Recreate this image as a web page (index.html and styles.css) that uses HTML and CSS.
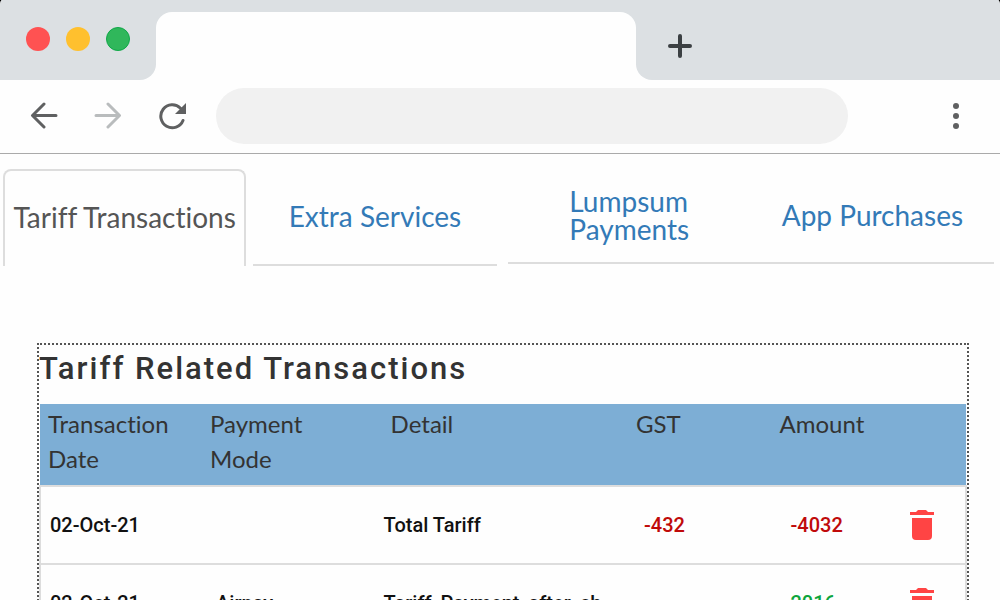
FILE: index.html
```html
<!DOCTYPE html>
<html lang="en">
<head>
    <meta charset="UTF-8">
    <meta name="viewport" content="width=device-width, initial-scale=1.0">
    <title>Tariff Related Transactions</title>
    <link rel="stylesheet" href="styles.css">
</head>
<body>
    <div class="browser">
        <div class="tab-strip">
            <div class="window-controls">
                <button class="dot dot-close" aria-label="Close"></button>
                <button class="dot dot-minimize" aria-label="Minimize"></button>
                <button class="dot dot-expand" aria-label="Expand"></button>
            </div>
            <div class="tab-wrap"><div class="tab"></div></div>
            <div class="strip-end">
                <button class="icon-btn new-tab" aria-label="New tab">
                    <svg width="24" height="24" viewBox="0 0 24 24" stroke="#3c4043" stroke-width="4" stroke-linecap="round">
                        <path d="M12 2v20M2 12h20"/>
                    </svg>
                </button>
            </div>
        </div>

        <div class="toolbar">
            <button class="icon-btn" aria-label="Back">
                <svg width="28" height="28" viewBox="0 0 28 28" fill="none" stroke="#5f6061" stroke-width="3" stroke-linecap="round" stroke-linejoin="round">
                    <path d="M14 2L2.500 13.500L14 25M3 13.500H26"/>
                </svg>
            </button>
            <button class="icon-btn" aria-label="Forward">
                <svg width="28" height="28" viewBox="0 0 28 28" fill="none" stroke="#b9bcbd" stroke-width="3" stroke-linecap="round" stroke-linejoin="round">
                    <path d="M14 2L25.500 13.500L14 25M25 13.500H2"/>
                </svg>
            </button>
            <button class="icon-btn" aria-label="Reload">
                <svg width="28" height="28" viewBox="0 0 28 28" fill="none" stroke="#5f6061" stroke-width="3" stroke-linecap="round">
                    <path d="M25 18.500A11.500 11.500 0 1 1 22.500 6.200"/>
                    <path d="M28 1V12H17Z" fill="#5f6061" stroke="none"/>
                </svg>
            </button>
            <input class="address" type="text" aria-label="Address">
            <button class="icon-btn" aria-label="Menu">
                <svg width="8" height="28" viewBox="0 0 8 28" fill="#5f6061">
                    <circle cx="4" cy="4" r="3"/>
                    <circle cx="4" cy="14" r="3"/>
                    <circle cx="4" cy="24" r="3"/>
                </svg>
            </button>
        </div>

        <main class="page">
            <nav class="nav-tabs">
                <a href="#tariff" class="nav-tab active">Tariff Transactions</a>
                <a href="#extra" class="nav-tab">Extra Services</a>
                <a href="#lumpsum" class="nav-tab short spaced"><span>Lumpsum<br>Payments</span></a>
                <a href="#apps" class="nav-tab short">App Purchases</a>
            </nav>

            <section class="panel" id="tariff">
                <h2>Tariff Related Transactions</h2>
                <table>
                    <thead>
                        <tr>
                            <th class="col-date">Transaction Date</th>
                            <th class="col-mode">Payment Mode</th>
                            <th class="col-detail">Detail</th>
                            <th class="col-gst">GST</th>
                            <th class="col-amount">Amount</th>
                            <th class="col-action"></th>
                        </tr>
                    </thead>
                    <tbody>
                        <tr>
                            <td class="col-date">02-Oct-21</td>
                            <td class="col-mode"></td>
                            <td class="col-detail">Total Tariff</td>
                            <td class="col-gst debit">-432</td>
                            <td class="col-amount debit">-4032</td>
                            <td class="col-action">
                                <button class="icon-btn" aria-label="Delete">
                                    <svg width="24" height="30" viewBox="0 0 24 30" fill="#ff4444">
                                        <path d="M0 2H6L8 0H16L18 2H24V5H0ZM2 8H22V26Q22 30 18 30H6Q2 30 2 26Z"/>
                                    </svg>
                                </button>
                            </td>
                        </tr>
                        <tr>
                            <td class="col-date">02-Oct-21</td>
                            <td class="col-mode">Airpay</td>
                            <td class="col-detail">Tariff_Payment_after_ch</td>
                            <td class="col-gst"></td>
                            <td class="col-amount credit">2016</td>
                            <td class="col-action">
                                <button class="icon-btn" aria-label="Delete">
                                    <svg width="24" height="30" viewBox="0 0 24 30" fill="#ff4444">
                                        <path d="M0 2H6L8 0H16L18 2H24V5H0ZM2 8H22V26Q22 30 18 30H6Q2 30 2 26Z"/>
                                    </svg>
                                </button>
                            </td>
                        </tr>
                    </tbody>
                </table>
            </section>
        </main>
    </div>
</body>
</html>
```
FILE: styles.css
```css
* {
    margin: 0;
    padding: 0;
    box-sizing: border-box;
}

body {
    font-family: Lato, "Liberation Sans", sans-serif;
    font-variant-ligatures: none;
    background: #000;
    color: #333;
}

.browser {
    height: 100vh;
    display: flex;
    flex-direction: column;
    background: #fefefe;
    border-radius: 2px 2px 0 0 / 6px 6px 0 0;
    overflow: hidden;
}

/* Window chrome */
.tab-strip {
    display: flex;
    flex: none;
    height: 80px;
}

.window-controls {
    display: flex;
    gap: 16px;
    width: 156px;
    padding: 27px 0 0 26px;
    background: #dce0e3;
    border-bottom-right-radius: 16px;
}

.dot {
    width: 24px;
    height: 24px;
    border: none;
    border-radius: 50%;
}

.dot-close {
    background: #ff5252;
}

.dot-minimize {
    background: #ffc02e;
}

.dot-expand {
    background: #30b75b;
    border: 1px solid #0fa848;
}

.tab-wrap {
    flex: 0 1 480px;
    padding-top: 12px;
    background: linear-gradient(#dce0e3 30px, #fefefe 30px);
}

.tab {
    height: 68px;
    background: #fefefe;
    border-radius: 16px 16px 0 0;
}

.strip-end {
    flex: 1;
    padding: 34px 0 0 32px;
    background: #dce0e3;
    border-bottom-left-radius: 16px;
}

.icon-btn {
    display: flex;
    background: none;
    border: none;
    cursor: pointer;
}

.toolbar {
    display: flex;
    flex: none;
    align-items: center;
    gap: 36px;
    height: 74px;
    padding: 0 40px 2px 30px;
    border-bottom: 1px solid #aaa;
}

.address {
    flex: 1;
    min-width: 0;
    height: 56px;
    margin: 0 68px 0 -6px;
    padding: 0 28px;
    border: none;
    border-radius: 28px;
    background: #f1f1f1;
    font-size: 20px;
}

/* Page */
.page {
    flex: 1;
    min-height: 0;
    overflow-y: auto;
    scrollbar-width: none;
}

.nav-tabs {
    display: flex;
    align-items: flex-start;
    padding: 15px 6px 0 3px;
}

.nav-tab {
    flex: 1 1 25%;
    display: flex;
    align-items: center;
    justify-content: center;
    height: 97px;
    padding-bottom: 2px;
    border-bottom: 2px solid #ddd;
    color: #337ab7;
    font-size: 28px;
    line-height: 28px;
    text-decoration: none;
    white-space: nowrap;
}

.nav-tab.active {
    margin-right: 7px;
    padding-bottom: 4px;
    border: 2px solid #ddd;
    border-bottom: none;
    border-radius: 8px 8px 0 0;
    color: #555;
}

.nav-tab.short {
    height: 95px;
}

.nav-tab.spaced {
    margin-left: 11px;
}

.panel {
    margin: 77px 31px 0 37px;
    border: 2px dotted #555;
}

.panel h2 {
    padding: 4px 0 15px;
    font-family: Roboto, sans-serif;
    font-size: 31px;
    font-weight: 500;
    line-height: 40px;
    letter-spacing: 2px;
}

table {
    width: 100%;
    table-layout: fixed;
    border-collapse: collapse;
}

thead {
    background: #7daed5;
}

th {
    height: 82px;
    padding: 2px 8px;
    font-size: 24px;
    font-weight: 400;
    line-height: 35px;
    text-align: left;
    vertical-align: top;
}

tbody tr {
    border: 2px solid #ddd;
}

td {
    height: 78px;
    color: #111;
    font-family: Roboto, sans-serif;
    font-size: 20px;
    font-weight: 500;
    line-height: 28px;
    white-space: nowrap;
}

th.col-date {
    width: 17.5%;
}

th.col-mode {
    width: 19.5%;
    padding-right: 40px;
}

th.col-detail {
    width: 26.5%;
}

th.col-gst {
    width: 15.5%;
}

th.col-amount {
    width: 11%;
}

td.col-date {
    padding-left: 9px;
}

td.col-mode {
    padding-left: 14px;
}

td.col-gst {
    padding-left: 16px;
}

td.col-amount {
    padding-left: 19px;
}

td.col-detail {
    padding-left: 1px;
}

td.col-action {
    padding-left: 6px;
}

td .icon-btn {
    margin: 0 auto;
}

td.debit {
    color: #c00a0a;
}

td.credit {
    color: #0da53c;
}
```
